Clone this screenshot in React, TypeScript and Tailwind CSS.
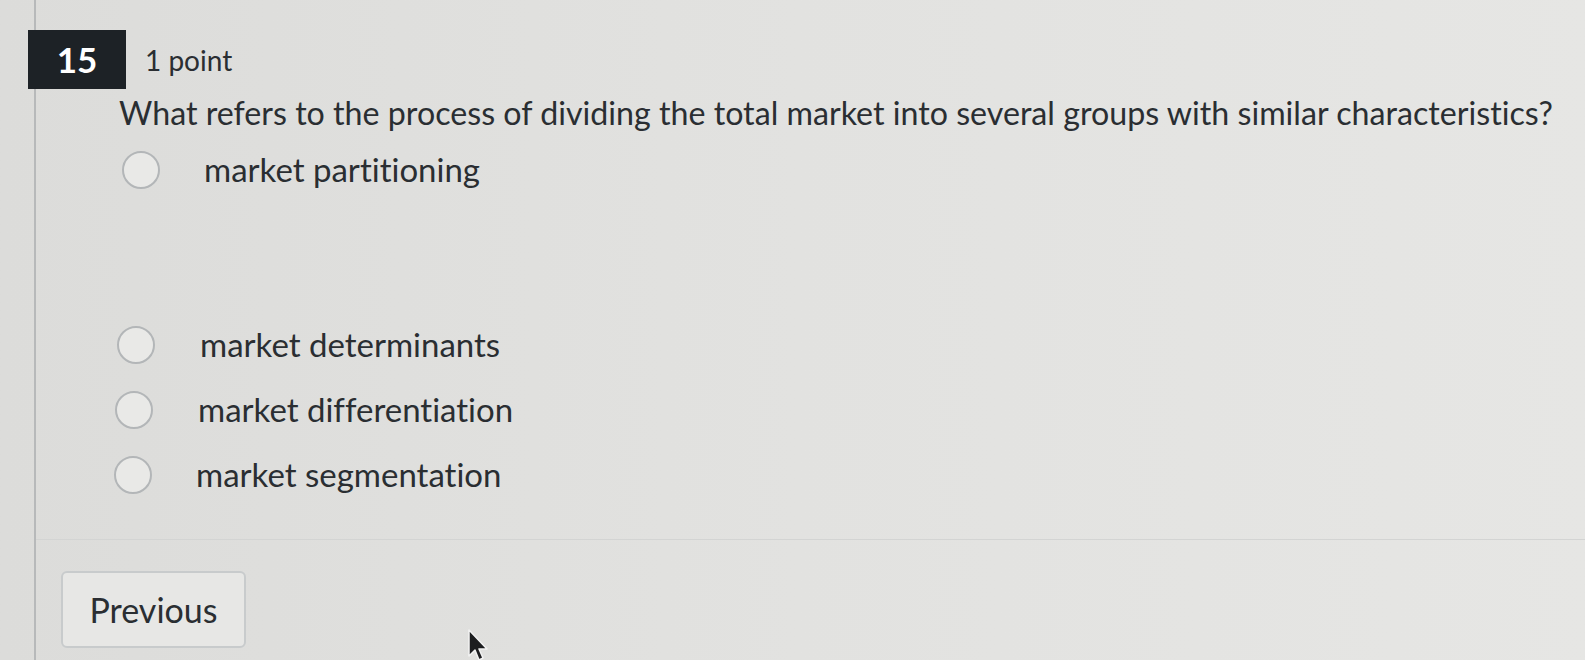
const options = [
  // small per-row shifts follow the slant of the photographed screen
  { label: "market partitioning", circle: "ml-[86px]", text: "ml-[44px]" },
  { label: "market determinants", circle: "ml-[81px]", text: "ml-[45px]" },
  { label: "market differentiation", circle: "ml-[79px]", text: "ml-[45px]" },
  { label: "market segmentation", circle: "ml-[78px]", text: "ml-[44px]" },
];

function Radio({ className }: { className: string }) {
  return (
    <span
      className={`block h-[38px] w-[38px] shrink-0 rounded-full border-2 border-[#b3b6b8] bg-[#e9e9e7] ${className}`}
    />
  );
}

function Cursor() {
  return (
    <svg
      className="absolute left-[467px] top-[629px]"
      width="22"
      height="34"
      viewBox="0 0 22 34"
    >
      <path
        d="M2 1 L2 27 L8 21 L12 31 L16 29 L12 20 L20 20 Z"
        fill="#1c1d1f"
        stroke="#f2f2f2"
        strokeWidth="1.5"
        strokeLinejoin="round"
      />
    </svg>
  );
}

export default function App() {
  return (
    <div
      className="relative h-[660px] w-[1585px] overflow-hidden bg-gradient-to-r from-[#dcdcda] via-[#e2e2e0] to-[#e6e6e4] text-[#2a2e32] [font-variant-ligatures:none]"
      style={{ fontFamily: "Lato, 'Open Sans', sans-serif" }}
    >
      <div className="ml-[34px] h-full border-l-2 border-[#b7b9ba] pt-[30px]">
        {/* header: number + points */}
        <div className="flex h-[59px] items-center">
          <div className="-ml-[8px] flex h-[59px] w-[98px] items-center justify-center bg-[#1d2226] text-[35px] font-bold text-white">
            15
          </div>
          <div className="ml-[19px] text-[28px]">1 point</div>
        </div>

        <p className="mt-[4px] ml-[83px] text-[32.2px] leading-[40px]">
          What refers to the process of dividing the total market into several
          groups with similar characteristics?
        </p>

        <div className="mt-[4px]">
          {options.map((o, i) => (
            <div
              key={o.label}
              className={`flex h-[65px] items-center ${i === 1 ? "mt-[110px]" : ""}`}
            >
              <Radio className={o.circle} />
              <span className={`${o.text} text-[33px]`}>{o.label}</span>
            </div>
          ))}
        </div>

        <div className="mt-[32px] border-t border-[#d3d4d3]" />

        <button className="mt-[31px] ml-[25px] flex h-[77px] w-[185px] items-center justify-center rounded-md border-2 border-[#c8cbcc] bg-[#e7e7e5] text-[34px] text-[#2a2e32]">
          Previous
        </button>
      </div>
      <Cursor />
    </div>
  );
}
